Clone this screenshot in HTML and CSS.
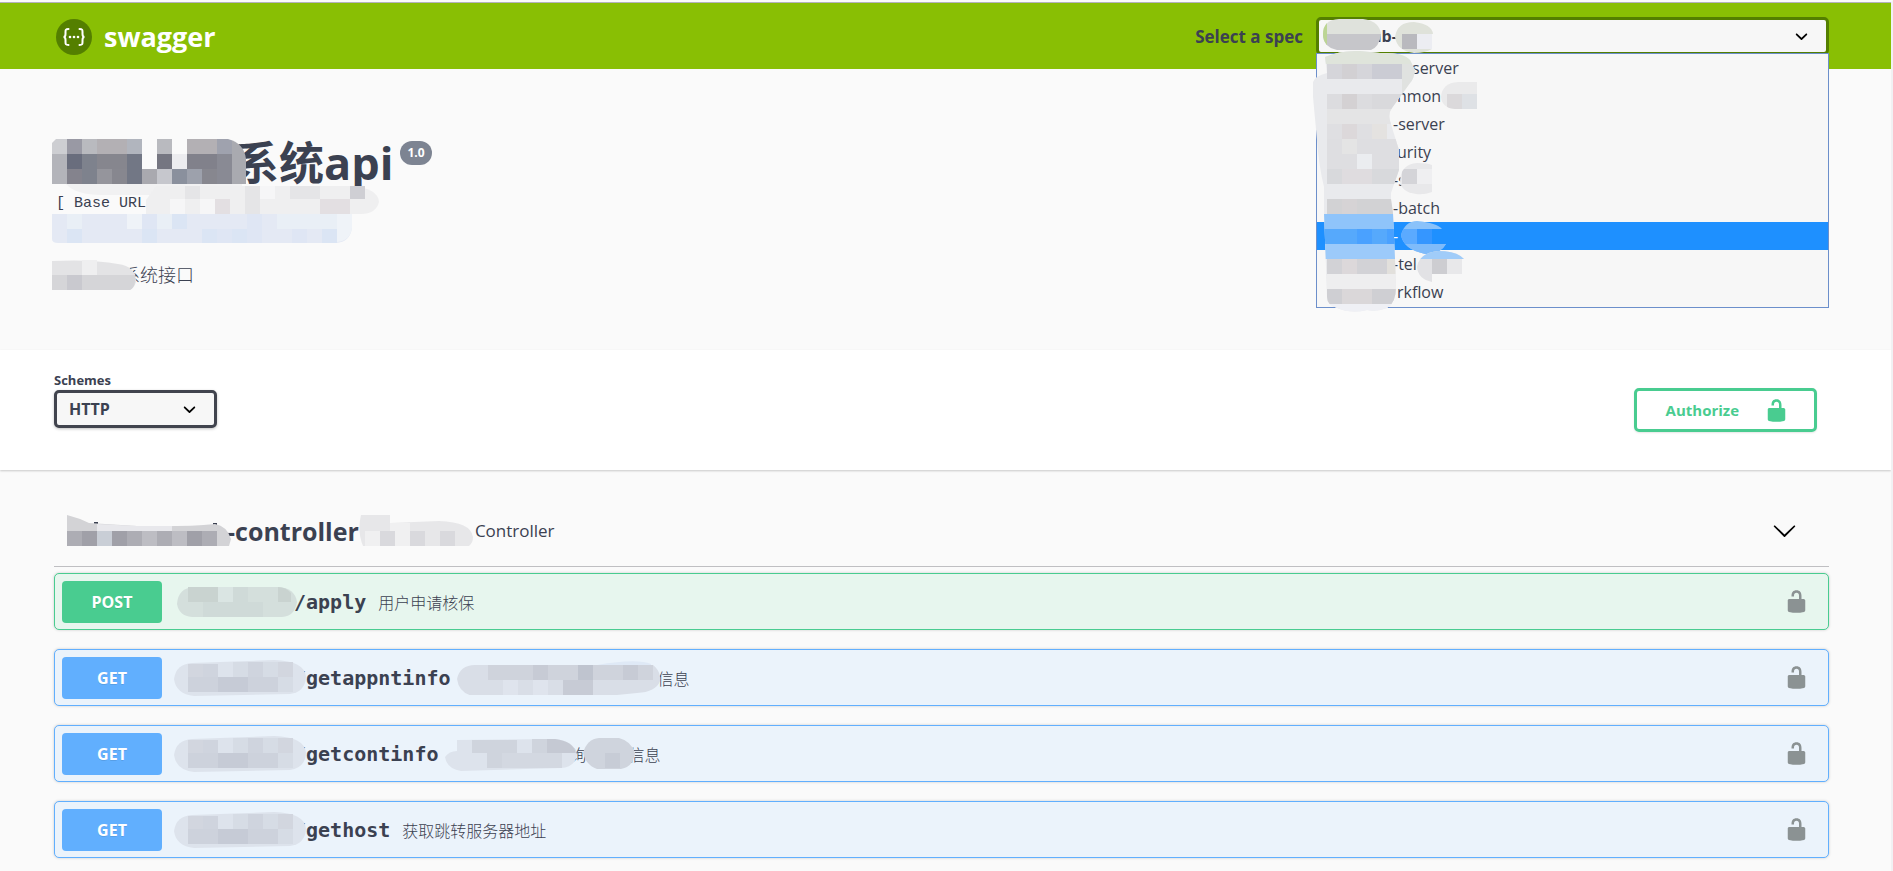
FILE: index.html
```html
<!DOCTYPE html>
<html lang="zh-CN">
<head>
<meta charset="utf-8">
<title>Swagger UI</title>
<link rel="stylesheet" href="styles.css">
</head>
<body>
<svg class="defs" aria-hidden="true">
  <symbol id="unlocked" viewBox="0 0 20 20"><path d="M15.8 8H14V5.6C14 2.703 12.665 1 10 1 7.334 1 6 2.703 6 5.6V6h2v-.801C8 3.754 8.797 3 10 3c1.203 0 2 .754 2 2.199V8H4c-.553 0-1 .646-1 1.199V17c0 .549.428 1.139.951 1.307l1.197.387C5.672 18.861 6.55 19 7.1 19h5.8c.549 0 1.428-.139 1.951-.307l1.196-.387c.524-.167.953-.757.953-1.306V9.199C17 8.646 16.352 8 15.8 8z"/></symbol>
  <symbol id="arrow-small" viewBox="0 0 20 20"><path d="M13.418 7.859c.271-.268.709-.268.978 0 .27.268.272.701 0 .969l-3.908 3.83c-.27.268-.707.268-.979 0l-3.908-3.83c-.27-.267-.27-.701 0-.969.271-.268.709-.268.978 0L10 11l3.418-3.141z"/></symbol>
  <symbol id="arrow-large" viewBox="0 0 20 20"><path d="M17.418 6.109c.272-.268.709-.268.979 0s.271.701 0 .969l-7.908 7.83c-.27.268-.707.268-.979 0l-7.908-7.83c-.27-.268-.27-.701 0-.969.271-.268.709-.268.979 0L10 13.25l7.418-7.141z"/></symbol>
  <symbol id="path-tiles" viewBox="0 0 132 38">
    <path fill="#dde3ec" d="M0 20Q2 5 18 4L100 1Q131 2 132 18Q131 33 116 35L20 37Q2 35 0 20Z"/>
    <path fill="#d2d6df" d="M14 5h30v13H14zM104 3h15v15h-15z"/>
    <path fill="#cfd4de" d="M29 5h15v13H29zM74 3h15v15H74z"/>
    <path fill="#d6dce5" d="M59 3h15v15H59zM89 3h15v15H89zM104 18h15v15h-15z"/>
    <path fill="#cdd2dc" d="M14 18h90v15H14z"/>
    <path fill="#c6cbd6" d="M44 18h30v15H44z"/>
  </symbol>
</svg>

<header class="topbar">
  <a class="brand" href="#">
    <svg class="brand-mark" viewBox="0 0 36 36" aria-hidden="true">
      <circle cx="18" cy="18" r="18" fill="#547f00"/>
      <g fill="none" stroke="#fff" stroke-width="2" stroke-linecap="round">
        <path d="M12.5 10c-3 0-3 1-3 3v2c0 2-1 3-2 3 1 0 2 1 2 3v2c0 2 0 3 3 3"/>
        <path d="M23.500 10c3 0 3 1 3 3v2c0 2 1 3 2 3-1 0-2 1-2 3v2c0 2 0 3-3 3"/>
      </g>
      <g fill="#fff"><circle cx="14" cy="18" r="1.3"/><circle cx="18" cy="18" r="1.3"/><circle cx="22" cy="18" r="1.3"/></g>
    </svg>
    <span>swagger</span>
  </a>
  <div class="spec">
    <label for="spec">Select a spec</label>
    <div class="spec-picker">
      <div class="select-box">
        <select id="spec" class="select spec-select"><option>nb-</option></select>
        <svg class="select-arrow" aria-hidden="true"><use href="#arrow-small"/></svg>
      </div>
      <ul class="menu" role="listbox" aria-label="Select a spec">
        <li class="far" role="option">server</li>
        <li class="mid" role="option">nmon</li>
        <li role="option">-server</li>
        <li class="mid" role="option">urity</li>
        <li role="option">-s</li>
        <li role="option">-batch</li>
        <li class="active" role="option" aria-selected="true">-</li>
        <li role="option">-tel</li>
        <li class="mid" role="option">rkflow</li>
      </ul>
      <svg class="menu-mask" viewBox="0 0 170 298" aria-hidden="true">
        <clipPath id="c-sel"><path d="M10 17Q10 3 26 2H50Q67 4 68 18Q66 30 58 33H24Q10 30 10 17Z"/></clipPath>
        <g clip-path="url(#c-sel)">
          <path fill="#dfe2dc" d="M0 0h70v17H0z"/><path fill="#c6c6ca" d="M0 17h70v17H0z"/><path fill="#bcd594" d="M8 0h6v28H8z"/>
        </g>
        <clipPath id="c-sel2"><path d="M82 20Q84 5 101 5Q119 7 120 17H119V32Q112 36 101 36Q84 34 82 20Z"/></clipPath>
        <g clip-path="url(#c-sel2)">
          <path fill="#dfe2da" d="M80 0h42v40H80z"/><path fill="#b9b9be" d="M89 17h15v15H89z"/><path fill="#ecedf2" d="M104 17h15v15h-15z"/>
        </g>
        <clipPath id="c-list"><path d="M12 40Q28 33 47 34L67 36Q90 35 97 43L102 53Q101 62 97 66L79 91Q75 96 77 104L86 133V153L78 176V182L80 196L82 242L83 270Q83 286 74 291Q64 295 54 293Q38 297 24 291Q14 288 14 280L13 250L11 196V170Q6 150 4 123L0 80V65Q2 59 14 56Z"/></clipPath>
        <g clip-path="url(#c-list)">
          <path fill="#e9eaed" d="M0 30h105v268H0z"/>
          <path fill="#dfe4db" d="M12 30h92v17H12z"/>
          <path fill="#d5d5da" d="M14 47h15v15H14zM44 47h15v15H44z"/><path fill="#d2d0d3" d="M29 47h15v15H29z"/>
          <path fill="#cbccd4" d="M59 47h30v15H59z"/><path fill="#e0e2e0" d="M89 47h15v30H89z"/>
          <path fill="#dcdcdf" d="M14 77h15v15H14zM44 77h15v15H44z"/><path fill="#d4d1d3" d="M29 77h15v15H29z"/><path fill="#d9d9dc" d="M59 77h30v15H59z"/>
          <path fill="#e4e4e5" d="M14 92h72v15H14z"/>
          <path fill="#dfdfe2" d="M14 107h60v15H14z"/><path fill="#dcd8da" d="M29 107h15v15H29z"/><path fill="#e4e2e0" d="M59 107h15v15H59z"/>
          <path fill="#dedee1" d="M14 122h72v30H14z"/><path fill="#e4e4e4" d="M29 122h15v15H29z"/><path fill="#ebedf0" d="M44 137h15v15H44z"/>
          <path fill="#d8d9dc" d="M14 152h30v15H14zM59 152h27v15H59z"/><path fill="#dfdcdf" d="M29 152h15v15H29zM44 152h15v15H44z"/>
          <path fill="#d2d2d4" d="M14 182h66v15H14z"/><path fill="#d6d3d5" d="M29 182h15v15H29z"/>
          <path fill="#8fc4fa" d="M8 197h78v15H8z"/>
          <path fill="#56a9fc" d="M8 212h78v15H8z"/><path fill="#4aa1ff" d="M44 212h15v15H44zM74 212h12v15H74z"/>
          <path fill="#9ccafa" d="M8 227h78v15H8z"/>
          <path fill="#d2d2d6" d="M14 242h60v15H14z"/><path fill="#dcd8da" d="M29 242h15v15H29z"/><path fill="#e2e0dc" d="M74 242h12v15H74z"/>
          <path fill="#eeeeef" d="M14 257h72v15H14z"/>
          <path fill="#cfcfd3" d="M14 272h72v15H14z"/><path fill="#dad7d9" d="M29 272h30v15H29z"/>
          <path fill="#eff0f5" d="M14 287h72v10H14z"/>
        </g>
        <clipPath id="c-b"><path d="M128 80Q129 66 145 65H164V92H142Q129 91 128 80Z"/></clipPath>
        <g clip-path="url(#c-b)"><path fill="#eaeaeb" d="M128 60h40v34h-40z"/><path fill="#dbd9db" d="M134 77h15v15h-15z"/><path fill="#dee1e5" d="M149 77h15v15h-15z"/></g>
        <clipPath id="c-e"><path d="M87 164Q88 147 104 146Q115 146 119 148V175Q111 178 103 177Q88 175 87 164Z"/></clipPath>
        <g clip-path="url(#c-e)"><path fill="#e8e8ea" d="M84 144h36v36H84z"/><path fill="#d4d4d8" d="M89 152h15v15H89z"/><path fill="#efeff1" d="M104 152h15v15h-15z"/></g>
        <clipPath id="c-g"><path d="M88 218Q92 204 104 204Q124 206 129 212H119V227H133Q127 238 112 237Q90 232 88 218Z"/></clipPath>
        <g clip-path="url(#c-g)"><path fill="#8ac2fa" d="M85 200h50v40H85z"/><path fill="#5baaff" d="M85 212h19v15H85z"/><path fill="#3596ff" d="M104 212h15v15h-15z"/><path fill="#7fbbfa" d="M92 227h42v12H92z"/></g>
        <clipPath id="c-h"><path d="M104 250Q106 236 125 234Q144 234 151 242H149V257H119V265Q105 262 104 250Z"/></clipPath>
        <g clip-path="url(#c-h)"><path fill="#e2e2e5" d="M100 230h55v40h-55z"/><path fill="#a0ccf9" d="M104 230h50v12h-50z"/><path fill="#cdcdd1" d="M119 242h15v15h-15z"/><path fill="#e8e8ea" d="M134 242h15v15h-15z"/></g>
      </svg>
    </div>
  </div>
</header>

<main>
  <section class="info">
    <h1 class="title">
      <svg class="mask title-mask" viewBox="0 0 194 56" aria-hidden="true">
        <path fill="#f1f1f2" d="M14 45H190V56H50Q24 56 14 45Z"/>
        <clipPath id="c-title"><path d="M4 0H176Q192 4 194 20V45H0V4Z"/></clipPath>
        <g clip-path="url(#c-title)">
          <path fill="#cdced2" d="M0 0h15v15H0z"/><path fill="#9999a4" d="M15 0h15v15H15z"/><path fill="#b9babf" d="M30 0h15v15H30zM105 0h15v15h-15z"/><path fill="#b3b0b4" d="M45 0h30v15H45zM135 0h30v15h-30z"/><path fill="#b1b5be" d="M75 0h15v15H75z"/><path fill="#9fa2ae" d="M165 0h15v15h-15z"/><path fill="#a9aab0" d="M180 0h15v45h-15z"/>
          <path fill="#b3b4ba" d="M0 15h15v30H0z"/><path fill="#696d7d" d="M15 15h15v15H15z"/><path fill="#7e828d" d="M30 15h15v30H30z"/><path fill="#86868e" d="M45 15h30v15H45z"/><path fill="#727785" d="M75 15h15v30H75z"/><path fill="#757681" d="M105 15h15v15h-15z"/><path fill="#ececef" d="M120 15h15v15h-15z"/><path fill="#81818b" d="M135 15h30v15h-30z"/><path fill="#898a94" d="M165 15h15v30h-15z"/>
          <path fill="#84838d" d="M15 30h15v15H15z"/><path fill="#95959c" d="M45 30h15v15H45z"/><path fill="#87878f" d="M60 30h15v15H60zM150 30h15v15h-15z"/><path fill="#a9a9af" d="M90 30h15v15H90z"/><path fill="#c6c7cd" d="M105 30h15v15h-15z"/><path fill="#8a909d" d="M120 30h15v15h-15z"/><path fill="#9da1ac" d="M135 30h15v15h-15z"/>
        </g>
      </svg>
      <span>系统api</span>
      <small class="version">1.0</small>
    </h1>
    <div class="base-url">
      <span>[ Base URL</span>
      <svg class="mask base-mask" viewBox="0 0 233 28" aria-hidden="true">
        <path fill="#efeff0" d="M10 0H205Q232 2 233 16Q230 28 215 28H0V14Z"/>
        <path fill="#e5e5e7" d="M39 0h15v13H39zM99 0h15v28H99zM144 0h30v13h-30zM69 13h15v15H69z"/>
        <path fill="#f6f6f7" d="M24 13h15v15H24zM54 13h15v15H54zM114 0h15v13h-15z"/>
        <path fill="#e3dfe2" d="M69 13h15v15H69zM174 13h30v15h-30z"/>
        <path fill="#cfcfd4" d="M204 0h15v13h-15z"/>
      </svg>
    </div>
    <svg class="mask link-mask" viewBox="0 0 300 29" aria-hidden="true">
      <path fill="#e4e9f4" d="M0 0H300V14Q298 28 284 29H6Q0 29 0 25Z"/>
      <path fill="#e9eff6" d="M15 0h15v15H15zM105 0h15v15h-15zM225 0h60v15h-60z"/>
      <path fill="#dbe5f4" d="M15 15h15v14H15zM90 15h15v14H90zM120 0h15v15h-15zM150 15h15v14h-15zM180 15h15v14h-15zM270 15h15v14h-15z"/>
      <path fill="#eff3f8" d="M75 0h15v15H75zM285 0h15v14q-2 13-15 14z"/>
      <path fill="#dfe6f4" d="M90 0h15v15H90zM165 15h15v14h-15zM195 0h15v29h-15zM240 15h15v14h-15z"/>
    </svg>
    <p class="description">
      <svg class="mask desc-mask" viewBox="0 0 84 30" aria-hidden="true">
        <path fill="#e3e3e5" d="M0 1Q40-1 66 4Q84 6 84 22Q82 28 78 30H0Z"/>
        <path fill="#efeff0" d="M30 0h15v15H30z"/>
        <path fill="#d5d5d8" d="M0 15h83v7q-1 6-5 8H0z"/>
        <path fill="#c9c9cf" d="M15 15h15v15H15z"/>
      </svg>
      <span>系统接口</span>
    </p>
  </section>

  <section class="schemes">
    <div class="scheme-field">
      <label for="scheme">Schemes</label>
      <div class="select-box">
        <select id="scheme" class="select scheme-select"><option>HTTP</option></select>
        <svg class="select-arrow" aria-hidden="true"><use href="#arrow-small"/></svg>
      </div>
    </div>
    <button class="authorize" type="button"><span>Authorize</span><svg class="icon" aria-hidden="true"><use href="#unlocked"/></svg></button>
  </section>

  <section class="operations">
    <div class="tag">
      <h2>
        <svg class="mask tag-mask" viewBox="0 0 164 31" aria-hidden="true">
          <path fill="#3b4151" d="M27 7h4v6h-4zM146 8h4v3h-4z"/>
          <path fill="#d3d3d6" d="M0 0Q12 3 22 8L70 11Q120 12 148 9Q160 11 164 24L162 31H0Z"/>
          <path fill="#e8e8ec" d="M30 9L70 11H105V16H30z"/>
          <path fill="#adadb4" d="M0 16h150v15H0z"/>
          <path fill="#a0a0a8" d="M15 16h15v15H15zM45 16h15v15H45zM120 16h15v15h-15z"/>
          <path fill="#c9ced6" d="M30 16h15v15H30z"/>
          <path fill="#bdbdc3" d="M75 16h15v15H75zM105 16h15v15h-15z"/>
        </svg>
        <span>-controller</span>
      </h2>
      <svg class="mask tag-desc-mask" viewBox="0 0 114 31" aria-hidden="true">
        <path fill="#e7e7e9" d="M2 0H31V8L80 6Q112 7 114 22Q114 28 110 31H4Q-2 16 2 0Z"/>
        <path fill="#f0f0f1" d="M6 16h15v15H6zM36 16h15v15H36zM31 8h20v8H31z"/>
        <path fill="#d9d9dd" d="M21 16h15v15H21zM51 16h15v15H51zM81 16h15v15H81z"/>
      </svg>
      <span class="tag-desc">Controller</span>
      <button class="toggle" type="button" aria-label="Collapse"><svg class="icon" aria-hidden="true"><use href="#arrow-large"/></svg></button>
    </div>

    <article class="op post">
      <button class="method" type="button">POST</button>
      <svg class="mask op-mask" viewBox="0 0 132 38" aria-hidden="true">
        <path fill="#d4dfdc" d="M3 21Q4 5 20 4H104Q121 5 123 19Q121 33 108 34H18Q5 33 3 21Z"/>
        <path fill="#c9d3d0" d="M14 4h15v15H14zM29 4h15v15H29zM104 4q8 0 13 6v9h-13z"/>
        <path fill="#dae5e3" d="M44 4h15v15H44z"/>
        <path fill="#cfdad8" d="M59 4h15v15H59zM29 19h60v15H29z"/>
      </svg>
      <code class="path">/apply</code>
      <span class="summary">用户申请核保</span>
      <button class="lock" type="button" aria-label="Authorization"><svg class="icon" aria-hidden="true"><use href="#unlocked"/></svg></button>
    </article>

    <article class="op get">
      <button class="method" type="button">GET</button>
      <svg class="mask op-mask" aria-hidden="true"><use href="#path-tiles"/></svg>
      <code class="path">/getappntinfo</code>
      <span class="summary">
        <svg class="mask long-mask" viewBox="0 0 203 34" aria-hidden="true">
          <path fill="#dfe9f6" d="M140 4Q180-3 194 3V12H130Z"/>
          <path fill="#d9dee7" d="M0 18Q3 4 18 4H196Q204 10 203 20Q199 31 180 32L150 35H16Q2 32 0 18Z"/>
          <path fill="#cfd3dc" d="M31 4h165v15H31z"/>
          <path fill="#bfc4cf" d="M121 4h15v15h-15z"/><path fill="#c7cbd5" d="M76 4h15v15H76zM166 4h15v15h-15zM106 19h30v15h-30z"/>
          <path fill="#dfe4ed" d="M46 19h15v15H46zM76 19h15v15H76z"/>
        </svg>
        <span>信息</span>
      </span>
      <button class="lock" type="button" aria-label="Authorization"><svg class="icon" aria-hidden="true"><use href="#unlocked"/></svg></button>
    </article>

    <article class="op get">
      <button class="method" type="button">GET</button>
      <svg class="mask op-mask" aria-hidden="true"><use href="#path-tiles"/></svg>
      <code class="path">/getcontinfo</code>
      <span class="summary">
        <svg class="mask mid-mask" viewBox="0 0 132 34" aria-hidden="true">
          <path fill="#dde3ec" d="M0 20Q4 14 12 14V3L110 2Q130 4 132 18Q130 30 116 31L16 34Q2 32 0 20Z"/>
          <path fill="#cfd4dd" d="M27 3h45v13H27zM87 2h15v14H87zM42 16h15v15H42z"/>
          <path fill="#c5c9d3" d="M102 2h8q18 2 21 14h-29z"/><path fill="#d3d8e1" d="M57 16h60v15H57z"/>
        </svg>
        <span>查询</span>
        <svg class="mask short-mask" viewBox="0 0 52 34" aria-hidden="true">
          <path fill="#cfd4dd" d="M0 16Q4 2 16 1H36Q48 4 52 16Q50 30 38 32H14Q3 28 0 16Z"/>
          <path fill="#c7ccd6" d="M22 16h15v15H22z"/>
        </svg>
        <span>信息</span>
      </span>
      <button class="lock" type="button" aria-label="Authorization"><svg class="icon" aria-hidden="true"><use href="#unlocked"/></svg></button>
    </article>

    <article class="op get">
      <button class="method" type="button">GET</button>
      <svg class="mask op-mask" aria-hidden="true"><use href="#path-tiles"/></svg>
      <code class="path">/gethost</code>
      <span class="summary">获取跳转服务器地址</span>
      <button class="lock" type="button" aria-label="Authorization"><svg class="icon" aria-hidden="true"><use href="#unlocked"/></svg></button>
    </article>
  </section>
</main>
</body>
</html>
```
FILE: styles.css
```css
* { box-sizing: border-box; }

body {
  margin: 0;
  border-top: 2px solid #fafafa;
  border-right: 2px solid #f1f1f3;
  background: #fafafa;
  color: #3b4151;
  font-family: "Open Sans", "Noto Sans CJK SC", sans-serif;
  font-size: 16px;
}

h1, h2, p, ul { margin: 0; padding: 0; }
button, select { font-family: inherit; color: inherit; }

.defs { display: none; }
.mask { flex: none; display: block; position: relative; z-index: 1; }
.icon { display: block; width: 25px; height: 25px; fill: currentColor; }

/* top bar */
.topbar {
  display: flex;
  justify-content: space-between;
  align-items: flex-start;
  height: 67px;
  padding: 14px 62px 0 56px;
  border-top: 1px solid #b4b2bd;
  background: #89bf04;
}
.brand {
  display: flex;
  align-items: center;
  gap: 12px;
  height: 40px;
  color: #fff;
  font-size: 27px;
  font-weight: 700;
  line-height: 36px;
  text-decoration: none;
}
.brand-mark { width: 36px; height: 36px; }
.spec { display: flex; align-items: flex-start; gap: 13px; }
.spec label { font-size: 17px; font-weight: 700; line-height: 40px; }
.spec-picker { position: relative; width: 513px; max-width: 50vw; }

.select-box { display: grid; align-items: center; }
.select-box > * { grid-area: 1 / 1; }
.select {
  appearance: none;
  width: 100%;
  height: 38px;
  border: 3px solid #41444e;
  border-radius: 5px;
  background: #f7f7f7;
  font-size: 16px;
  font-weight: 700;
}
.spec-select { padding: 0 48px 0 52px; border-color: #547f00; }
.select-arrow {
  justify-self: end;
  width: 25px;
  height: 25px;
  margin-right: 15px;
  pointer-events: none;
}

.menu {
  position: absolute;
  z-index: 2;
  top: 36px;
  left: 0;
  right: 0;
  padding-bottom: 1px;
  border: 1px solid #6c8fcb;
  background: #f7f7f7;
  list-style: none;
}
.menu li { padding-left: 76px; line-height: 28px; }
.menu .mid { padding-left: 80px; }
.menu .far { padding-left: 95px; }
.menu .active { background: #1e90ff; color: #fff; }
.menu-mask {
  position: absolute;
  z-index: 3;
  top: 0;
  left: -3px;
  width: 170px;
  height: 298px;
  pointer-events: none;
}

/* info */
.info { padding: 70px 52px 60px; }
.title { display: flex; align-items: flex-start; height: 47px; font-size: 45px; line-height: 48px; }
.title-mask { width: 194px; height: 56px; margin-right: -12px; }
.version {
  margin: 2px 0 0 7px;
  padding: 0 7px;
  border-radius: 12px;
  background: #7d8492;
  color: #fff;
  font-size: 12px;
  line-height: 24px;
}
.base-url {
  display: flex;
  height: 28px;
  padding-left: 4px;
  font-family: "Liberation Mono", monospace;
  font-size: 15px;
  line-height: 36px;
}
.base-mask { width: 233px; height: 28px; }
.link-mask { width: 300px; height: 29px; }
.description {
  display: flex;
  align-items: center;
  height: 30px;
  margin-top: 17px;
  font-size: 18px;
  font-weight: 300;
  line-height: 30px;
}
.desc-mask { width: 84px; height: 30px; margin-right: -14px; }

/* schemes */
.schemes {
  display: flex;
  justify-content: space-between;
  align-items: flex-start;
  height: 120px;
  padding: 20px 74px 0 54px;
  background: #fff;
  box-shadow: 0 1px 2px rgba(0, 0, 0, .2);
}
.scheme-field { width: 163px; }
.scheme-field label { display: block; font-size: 13px; font-weight: 700; line-height: 20px; }
.scheme-select { padding: 0 40px 0 12px; box-shadow: 0 1px 3px rgba(0, 0, 0, .25); }
.authorize {
  display: flex;
  align-items: center;
  gap: 25px;
  height: 44px;
  margin-top: 18px;
  padding: 0 25px 0 29px;
  border: 3px solid #49cc90;
  border-radius: 5px;
  background: transparent;
  box-shadow: 0 1px 2px rgba(0, 0, 0, .1);
  color: #49cc90;
  font-size: 15px;
  font-weight: 700;
}

/* operations */
.operations { padding: 31px 62px 14px 54px; }
.tag {
  display: flex;
  align-items: center;
  height: 66px;
  margin-bottom: 6px;
  padding: 0 32px 6px 13px;
  border-bottom: 1px solid #bfbfc2;
}
.tag h2 { display: flex; align-items: center; font-size: 25px; line-height: 32px; }
.tag-mask { width: 164px; height: 31px; margin-right: -4px; }
.tag-desc-mask { width: 114px; height: 31px; }
.tag-desc { margin-left: 2px; font-size: 17px; line-height: 24px; }
.toggle, .lock { margin-left: auto; padding: 0; border: 0; background: none; }
.toggle { color: #000; }

.op {
  display: flex;
  align-items: center;
  height: 57px;
  margin-bottom: 19px;
  padding: 0 19px 0 7px;
  border: 1px solid;
  border-radius: 5px;
  box-shadow: 0 0 3px rgba(0, 0, 0, .19);
}
.post { border-color: #49cc90; background: #e7f6ee; }
.get { border-color: #61affe; background: #ebf3fb; }
.method {
  width: 100px;
  height: 42px;
  border: 0;
  border-radius: 4px;
  color: #fff;
  font-size: 16px;
  font-weight: 700;
  text-shadow: 0 1px 0 rgba(0, 0, 0, .1);
}
.post .method { background: #49cc90; }
.get .method { background: #61affe; }
.op-mask { width: 132px; height: 38px; margin: 0 -12px 0 12px; }
.path { font-family: "DejaVu Sans Mono", monospace; font-size: 20px; font-weight: 700; }
.summary { display: flex; align-items: center; margin-left: 12px; font-weight: 300; }
.long-mask { width: 203px; height: 34px; margin: 0 -2px 0 -6px; }
.mid-mask { width: 132px; height: 34px; margin: 0 -22px 0 -6px; }
.short-mask { width: 52px; height: 34px; margin: 0 -6px 0 -4px; }
.lock { color: #8b9293; }
```
